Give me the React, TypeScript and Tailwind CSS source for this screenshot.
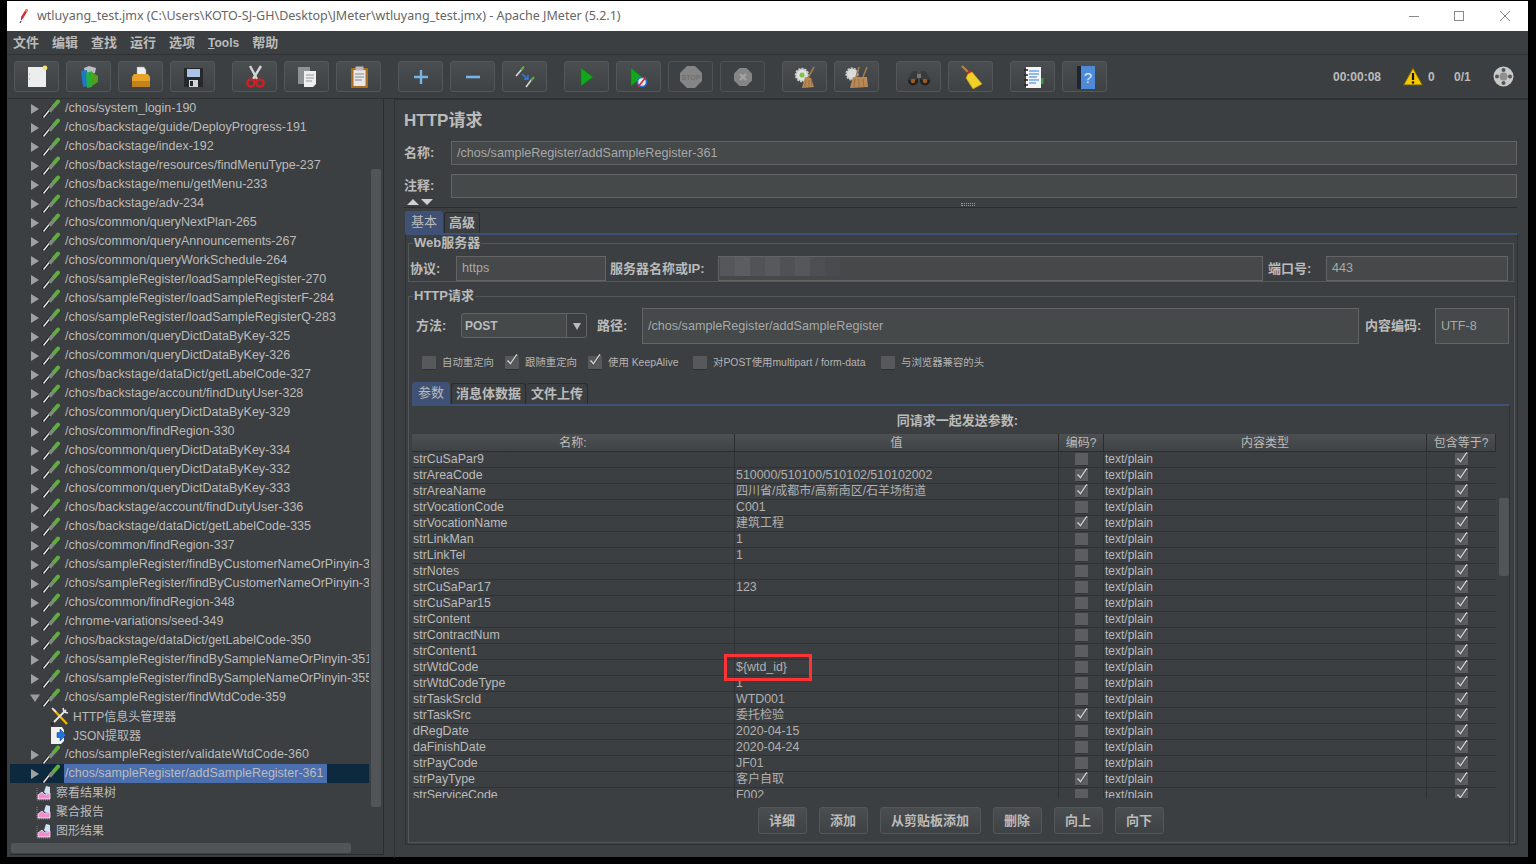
import React from "react";

const Pipette = () => (
  <svg width="20" height="20" viewBox="0 0 20 20" className="shrink-0">
    <path d="M2 19 L11 8" stroke="#15171a" strokeWidth="3.2" />
    <path d="M2.5 18.5 L10.5 8.5" stroke="#e6e6e6" strokeWidth="1.5" />
    <path d="M8.5 12.5 L13.5 6.5" stroke="#7d8a7d" strokeWidth="3.6" />
    <path d="M13.5 6.5 L17 2.5" stroke="#5fae3e" strokeWidth="4" strokeLinecap="round" />
  </svg>
);

const Wrench = () => (
  <svg width="19" height="19" viewBox="0 0 19 19" className="shrink-0">
    <path d="M3 2 L17 17" stroke="#f0b400" strokeWidth="2.4" />
    <path d="M2 1 L6 5" stroke="#e8e8e8" strokeWidth="1.6" />
    <path d="M16 3 L4 15" stroke="#e4e4e4" strokeWidth="2" />
    <path d="M13 1 L14 5 L18 6" fill="none" stroke="#e4e4e4" strokeWidth="1.6" />
    <path d="M1 16 L3 18" stroke="#222" strokeWidth="2" />
  </svg>
);

const JsonDoc = () => (
  <svg width="19" height="19" viewBox="0 0 19 19" className="shrink-0">
    <path d="M1 1 H12 L14 4 V15 L11 18 H1 Z" fill="#f1f1f1" />
    <path d="M10 3 L16 9 L10 15 V11.5 H7 V6.5 H10 Z" fill="#2272d8" stroke="#0e3f8c" strokeWidth="0.5" />
  </svg>
);

const ChartIcon = () => (
  <svg width="16" height="16" viewBox="0 0 16 16" className="shrink-0">
    <path d="M1 3 V15 H15" fill="none" stroke="#888" strokeWidth="1" strokeDasharray="1 1" />
    <path d="M2 14 V10 L6 7 L9 10 L14 8 V14 Z" fill="#f28ad2" stroke="#fff" strokeWidth="0.7" />
    <path d="M10 1 L14 2 V8 L10 9 L8 7 Z" fill="#cfe0f7" />
  </svg>
);

const Arrow = ({ open = false }: { open?: boolean }) => (
  <svg width="10" height="10" viewBox="0 0 10 10" className="shrink-0">
    {open ? <path d="M0 1.5 H10 L5 9 Z" fill="#9a9a9a" /> : <path d="M1 0 L9 5 L1 10 Z" fill="#a0a0a0" />}
  </svg>
);

const Check = ({ small = false }: { small?: boolean }) => (
  <svg width="14" height="14" viewBox="0 0 14 14" className={small ? "absolute left-0 -top-[2px]" : "absolute left-0 -top-[3px]"}>
    <path d="M2.5 7.5 L5.5 11 L12 1.5" fill="none" stroke="#cfcfcf" strokeWidth="1.6" />
    <path d="M2.5 9 L5.5 12.5 L12 3" fill="none" stroke="#3a3c3e" strokeWidth="0.8" />
  </svg>
);

const Box = ({ on = false }: { on?: boolean }) => (
  <div className="relative w-[13px] h-[13px] bg-[#5b5d5f] border-b border-[#333537] rounded-[1px] shrink-0">
    {on && <Check small />}
  </div>
);

const FormCheck = ({ on = false, label, width }: { on?: boolean; label: string; width: string }) => (
  <div className={`flex items-center gap-[6px] ${width}`}>
    <div className="relative w-[14px] h-[14px] bg-[#56585a] border-b border-[#2f3133] rounded-[1px] shrink-0">
      {on && <Check />}
    </div>
    <span className="text-[10.4px] text-[#b4b4b4] whitespace-nowrap">{label}</span>
  </div>
);

const icons: Record<string, React.ReactNode> = {
  new: (
    <>
      <rect x="3" y="2" width="18" height="20" fill="#eceded" />
      <circle cx="4.5" cy="9" r=".6" fill="#999" />
      <circle cx="4.5" cy="14" r=".6" fill="#999" />
      <circle cx="20" cy="3" r="2.4" fill="#f3e27c" />
    </>
  ),
  templates: (
    <>
      <path d="M7 3 L12 1 L19 3 L18 8 H8 Z" fill="#b9bec4" />
      <path d="M4 6 L10 5 L12 21 L6 22 Z" fill="#1c78c8" />
      <path d="M9 8 L15 6 L15 22 L10 23 Z" fill="#25b03a" />
      <path d="M15 7 L21 11 L21 17 L15 21 Z" fill="#4f9e1c" />
    </>
  ),
  open: (
    <>
      <path d="M8 2 H15 L17 5 V13 H8 Z" fill="#eeeeee" stroke="#999" strokeWidth=".5" />
      <path d="M3 12 L5 9 H19 L21 12 V22 H3 Z" fill="#e5a32a" />
      <path d="M3 16 H21 V22 H3 Z" fill="#c4831a" />
    </>
  ),
  save: (
    <>
      <rect x="3" y="3" width="19" height="19" fill="#26292b" />
      <rect x="6" y="4" width="13" height="8" fill="#a9c4e4" />
      <rect x="8" y="15" width="9" height="7" fill="#d5d5d5" />
      <rect x="9" y="16" width="3" height="5" fill="#26292b" />
    </>
  ),
  cut: (
    <>
      <path d="M7 1 L14 14 M18 1 L10 14" stroke="#d4d4d4" strokeWidth="2.4" />
      <circle cx="8" cy="18" r="3.6" fill="none" stroke="#d01f24" strokeWidth="2.4" />
      <circle cx="17" cy="18" r="3.6" fill="none" stroke="#d01f24" strokeWidth="2.4" />
    </>
  ),
  copy: (
    <>
      <rect x="3" y="2" width="12" height="17" fill="#8f9295" />
      <path d="M9 6 H21 V19 L18 22 H9 Z" fill="#eeeeee" />
      <path d="M11 10 H19 M11 13 H19 M11 16 H17" stroke="#999" strokeWidth="1" />
    </>
  ),
  paste: (
    <>
      <rect x="4" y="3" width="17" height="20" rx="1" fill="#a8701e" />
      <rect x="6.5" y="5" width="12" height="16" fill="#e8e8e8" />
      <rect x="8.5" y="1.5" width="8" height="4" fill="#bdbdbd" />
      <path d="M8 9 H17 M8 12 H17 M8 15 H15" stroke="#888" strokeWidth="1" />
    </>
  ),
  plus: <path d="M5 12 H19 M12 5 V19" stroke="#79b4e6" strokeWidth="2.4" />,
  minus: <path d="M5 12 H19" stroke="#79b4e6" strokeWidth="2.6" />,
  toggle: (
    <>
      <path d="M3 11 L10 3" stroke="#d8d8d8" strokeWidth="1.6" />
      <path d="M8 5 L11 1.5" stroke="#5aa83c" strokeWidth="2.2" />
      <path d="M13 22 L19 14" stroke="#d8d8d8" strokeWidth="1.6" />
      <path d="M18 15.5 L21 12" stroke="#5aa83c" strokeWidth="2.2" />
      <path d="M9 9 L15 14 M15 10 V14 H11" fill="none" stroke="#2f7fe0" strokeWidth="1.4" />
    </>
  ),
  play: <path d="M6 3 L18 12 L6 21 Z" fill="#12a81c" stroke="#0a7a12" strokeWidth=".5" />,
  playNt: (
    <>
      <path d="M4 3 L15 12 L4 21 Z" fill="#12a81c" stroke="#0a7a12" strokeWidth=".5" />
      <circle cx="15" cy="17" r="4.5" fill="#e4eefa" stroke="#2f6fd0" strokeWidth="1.6" />
      <path d="M11 22 L19 12" stroke="#d8222a" strokeWidth="1.6" />
    </>
  ),
  stop: (
    <>
      <path d="M8 1 H16 L23 8 V16 L16 23 H8 L1 16 V8 Z" fill="#858585" />
      <text x="12" y="15" textAnchor="middle" fontSize="7" fontWeight="700" fill="#6f6f6f" fontFamily="Liberation Sans">STOP</text>
    </>
  ),
  shutdown: (
    <>
      <path d="M8.5 3 H15.5 L21 8.5 V15.5 L15.5 21 H8.5 L3 15.5 V8.5 Z" fill="#858585" />
      <path d="M9 9 L15 15 M15 9 L9 15" stroke="#a3a3a3" strokeWidth="2.4" />
    </>
  ),
  clear: (
    <>
      <circle cx="9" cy="10" r="6" fill="#e4e4e4" stroke="#cfcfcf" strokeDasharray="2 1" strokeWidth="2.4" />
      <circle cx="9" cy="10" r="2.6" fill="#7fc44a" />
      <path d="M21 2 L15 13" stroke="#a37a4a" strokeWidth="1.6" />
      <path d="M12 12 L18 13 L21 22 L9 23 Z" fill="#b98a58" />
      <path d="M13 15 L12 22 M16 15 L16 22 M18 15 L19 21" stroke="#8a6238" strokeWidth=".7" />
    </>
  ),
  clearAll: (
    <>
      <circle cx="7" cy="9" r="5.5" fill="#dcdcdc" stroke="#c8c8c8" strokeDasharray="2 1" strokeWidth="2.2" />
      <path d="M14 2 L11 12 M22 2 L18 12" stroke="#a37a4a" strokeWidth="1.6" />
      <path d="M8 12 L22 12 L23 22 L5 23 Z" fill="#b98a58" />
      <path d="M10 14 L9 22 M14 14 V22 M18 14 L19 22" stroke="#8a6238" strokeWidth=".7" />
    </>
  ),
  find: (
    <>
      <circle cx="6" cy="15.5" r="5" fill="#1f1f1f" />
      <circle cx="18" cy="15.5" r="5" fill="#1f1f1f" />
      <path d="M4 8 L6 6 H10 V15 H14 V6 H18 L20 8 L23 15 H1 Z" fill="#3a3a3a" />
      <rect x="10" y="9" width="4" height="4" fill="#777" />
      <circle cx="6" cy="16" r="2.3" fill="#a05a1e" />
      <circle cx="18" cy="16" r="2.3" fill="#a05a1e" />
    </>
  ),
  broom: (
    <>
      <path d="M3 1 L10 8" stroke="#b9812c" strokeWidth="2.4" />
      <path d="M7 8 L11 5 L14 8 L11 11 Z" fill="#c9201f" />
      <path d="M9 9 L13 7 L23 19 L14 24 L7 13 Z" fill="#f0cf28" stroke="#c49f14" strokeWidth=".6" />
    </>
  ),
  log: (
    <>
      <rect x="5" y="2" width="15" height="21" fill="#f4f4f4" />
      <path d="M8 6 H18 M8 9 H18 M8 12 H16 M8 15 H18 M8 18 H15" stroke="#2f7fe0" strokeWidth="1.2" />
      <path d="M3 5 H7 M3 10 H7 M3 15 H7 M3 20 H7" stroke="#222" strokeWidth="1.6" />
      <rect x="20" y="13" width="2.5" height="6" fill="#2f9a3a" />
    </>
  ),
  help: (
    <>
      <rect x="4" y="1" width="18" height="23" fill="#4f8ad8" />
      <rect x="4" y="1" width="4" height="23" fill="#1d2530" />
      <text x="15" y="18" textAnchor="middle" fontSize="15" fill="#dfeaf8" fontFamily="Liberation Sans">?</text>
    </>
  ),
};

const ToolButton = ({ icon, off = false }: { icon: string; off?: boolean }) => (
  <div
    className={`w-[45px] h-[31px] rounded-[3px] border flex items-center justify-center shrink-0 ${
      off ? "border-[#4e5254] bg-[#3e4143]" : "border-[#53575a] bg-linear-to-b from-[#4a4e50] to-[#3f4244]"
    }`}
  >
    <svg width="24" height="24" viewBox="0 0 24 24">
      {icons[icon]}
    </svg>
  </div>
);

const toolGroups: { icon: string; off?: boolean }[][] = [
  [{ icon: "new" }, { icon: "templates" }, { icon: "open" }, { icon: "save" }],
  [{ icon: "cut" }, { icon: "copy" }, { icon: "paste" }],
  [{ icon: "plus" }, { icon: "minus" }, { icon: "toggle" }],
  [{ icon: "play" }, { icon: "playNt" }, { icon: "stop", off: true }, { icon: "shutdown", off: true }],
  [{ icon: "clear" }, { icon: "clearAll" }],
  [{ icon: "find" }, { icon: "broom" }],
  [{ icon: "log" }, { icon: "help" }],
];

const treePaths = [
  "/chos/system_login-190",
  "/chos/backstage/guide/DeployProgress-191",
  "/chos/backstage/index-192",
  "/chos/backstage/resources/findMenuType-237",
  "/chos/backstage/menu/getMenu-233",
  "/chos/backstage/adv-234",
  "/chos/common/queryNextPlan-265",
  "/chos/common/queryAnnouncements-267",
  "/chos/common/queryWorkSchedule-264",
  "/chos/sampleRegister/loadSampleRegister-270",
  "/chos/sampleRegister/loadSampleRegisterF-284",
  "/chos/sampleRegister/loadSampleRegisterQ-283",
  "/chos/common/queryDictDataByKey-325",
  "/chos/common/queryDictDataByKey-326",
  "/chos/backstage/dataDict/getLabelCode-327",
  "/chos/backstage/account/findDutyUser-328",
  "/chos/common/queryDictDataByKey-329",
  "/chos/common/findRegion-330",
  "/chos/common/queryDictDataByKey-334",
  "/chos/common/queryDictDataByKey-332",
  "/chos/common/queryDictDataByKey-333",
  "/chos/backstage/account/findDutyUser-336",
  "/chos/backstage/dataDict/getLabelCode-335",
  "/chos/common/findRegion-337",
  "/chos/sampleRegister/findByCustomerNameOrPinyin-346",
  "/chos/sampleRegister/findByCustomerNameOrPinyin-347",
  "/chos/common/findRegion-348",
  "/chrome-variations/seed-349",
  "/chos/backstage/dataDict/getLabelCode-350",
  "/chos/sampleRegister/findBySampleNameOrPinyin-351",
  "/chos/sampleRegister/findBySampleNameOrPinyin-355",
];

const TreeRow = ({ label, open = false, selected = false }: { label: string; open?: boolean; selected?: boolean }) => (
  <div className={`h-[19px] flex items-center pl-[20px] whitespace-nowrap overflow-hidden text-[12.5px] ${selected ? "bg-[#0d293e]" : ""}`}>
    <Arrow open={open} />
    <span className="ml-px">
      <Pipette />
    </span>
    <span className={`ml-[3px] pl-px pr-[4px] h-[19px] leading-[19px] ${selected ? "bg-[#4b6eaf]" : ""}`}>{label}</span>
  </div>
);

const LeafRow = ({ label, children }: { label: string; children: React.ReactNode }) => (
  <div className="h-[19px] flex items-center pl-[40px] gap-[4px] whitespace-nowrap text-[12px]">
    {children}
    <span>{label}</span>
  </div>
);

const ListenerRow = ({ label }: { label: string }) => (
  <div className="h-[19px] flex items-center pl-[26px] gap-[4px] whitespace-nowrap text-[12px]">
    <ChartIcon />
    <span>{label}</span>
  </div>
);

const rows: [string, string, boolean][] = [
  ["strCuSaPar9", "", false],
  ["strAreaCode", "510000/510100/510102/510102002", true],
  ["strAreaName", "四川省/成都市/高新南区/石羊场街道", true],
  ["strVocationCode", "C001", false],
  ["strVocationName", "建筑工程", true],
  ["strLinkMan", "1", false],
  ["strLinkTel", "1", false],
  ["strNotes", "", false],
  ["strCuSaPar17", "123", false],
  ["strCuSaPar15", "", false],
  ["strContent", "", false],
  ["strContractNum", "", false],
  ["strContent1", "", false],
  ["strWtdCode", "${wtd_id}", false],
  ["strWtdCodeType", "1", false],
  ["strTaskSrcId", "WTD001", false],
  ["strTaskSrc", "委托检验", true],
  ["dRegDate", "2020-04-15", false],
  ["daFinishDate", "2020-04-24", false],
  ["strPayCode", "JF01", false],
  ["strPayType", "客户自取", true],
  ["strServiceCode", "F002", false],
];

const Field = ({ className, children }: { className: string; children?: React.ReactNode }) => (
  <div className={`bg-[#45494a] border border-[#646464] flex items-center pl-[5px] text-[#a8a8a8] ${className}`}>{children}</div>
);

const Label = ({ className = "", children }: { className?: string; children: React.ReactNode }) => (
  <span className={`font-bold text-[13px] text-[#bbbbbb] whitespace-nowrap ${className}`}>{children}</span>
);

const blurBlocks = ["bg-[#54585a]", "bg-[#5a5e60]", "bg-[#505456]", "bg-[#565a5c]", "bg-[#4e5254]", "bg-[#54585a]", "bg-[#4c5052]", "bg-[#484c4e]"];

const headers = ["名称:", "值", "编码?", "内容类型", "包含等于?"];
const bottomButtons = ["详细", "添加", "从剪贴板添加", "删除", "向上", "向下"];

export default function App() {
  return (
    <div className="h-screen bg-black pl-[7px] pt-px overflow-hidden font-['Liberation_Sans','Noto_Sans_CJK_SC',sans-serif] text-[12.6px] text-[#bbbbbb]">
      <div className="w-[1521px] h-[856px] flex flex-col bg-[#3c3f41]">
        {/* title bar */}
        <div className="h-[30px] shrink-0 bg-white flex items-center pl-[11px] text-[#666666]">
          <svg width="12" height="16" viewBox="0 0 12 16" className="shrink-0">
            <path d="M8 1 L10 2 L6 9 L3 13 L3 9 Z" fill="#d62b3c" />
            <path d="M8 1 L10 2 L9 4 L7 3 Z" fill="#f08a2a" />
            <path d="M2 15 L3 13" stroke="#222" strokeWidth="1" />
          </svg>
          <span className="ml-[7px] font-['Noto_Sans',sans-serif] text-[12.5px] whitespace-nowrap">
            wtluyang_test.jmx (C:\Users\KOTO-SJ-GH\Desktop\JMeter\wtluyang_test.jmx) - Apache JMeter (5.2.1)
          </span>
          <div className="ml-auto flex items-center">
            <div className="w-[10px] h-px bg-[#888]" />
            <div className="ml-[35px] w-[10px] h-[10px] border border-[#888]" />
            <svg width="10" height="10" viewBox="0 0 10 10" className="ml-[36px] mr-[18px]">
              <path d="M0 0 L10 10 M10 0 L0 10" stroke="#888" strokeWidth="1" />
            </svg>
          </div>
        </div>

        {/* menu */}
        <div className="h-[24px] shrink-0 flex items-center pl-[6px] gap-[13px] font-bold border-b border-[#2f3234] text-[13px]">
          <span>文件</span>
          <span>编辑</span>
          <span>查找</span>
          <span>运行</span>
          <span>选项</span>
          <span className="text-[12px]">
            <span className="underline">T</span>ools
          </span>
          <span>帮助</span>
        </div>

        {/* toolbar */}
        <div className="h-[43px] shrink-0 flex items-center pl-[7px] pb-px border-b border-[#2f3234] mt-px">
          <div className="flex gap-[17px]">
            {toolGroups.map((g, i) => (
              <div key={i} className="flex gap-[7px]">
                {g.map((b) => (
                  <ToolButton key={b.icon} icon={b.icon} off={b.off} />
                ))}
              </div>
            ))}
          </div>
          <span className="ml-[226px] w-[70px] font-bold text-[12px]">00:00:08</span>
          <svg width="20" height="20" viewBox="0 0 20 20" className="shrink-0">
            <path d="M10 1 L19.5 18 H0.5 Z" fill="#f5c800" stroke="#6b5a10" strokeWidth="1" />
            <path d="M10 6 V13" stroke="#111" strokeWidth="2.2" />
            <circle cx="10" cy="15.5" r="1.2" fill="#111" />
          </svg>
          <span className="ml-[5px] w-[26px] font-bold text-[12px]">0</span>
          <span className="w-[39px] font-bold text-[12px]">0/1</span>
          <svg width="21" height="21" viewBox="0 0 21 21" className="shrink-0">
            <circle cx="10.5" cy="10.5" r="10" fill="#c9c9c9" />
            <circle cx="10.5" cy="10.5" r="4" fill="#8f8f8f" />
            <circle cx="10.5" cy="4" r="2" fill="#555" />
            <circle cx="10.5" cy="17" r="2" fill="#555" />
            <circle cx="4" cy="10.5" r="2" fill="#555" />
            <circle cx="17" cy="10.5" r="2" fill="#555" />
          </svg>
        </div>

        <div className="flex-1 flex min-h-0">
          {/* tree */}
          <div className="ml-[3px] w-[374px] h-[756px] flex flex-col border-r border-b border-[#2a2c2e] shrink-0">
            <div className="flex h-[741px]">
              <div className="w-[359px] overflow-hidden shrink-0">
                {treePaths.map((p) => (
                  <TreeRow key={p} label={p} />
                ))}
                <TreeRow label="/chos/sampleRegister/findWtdCode-359" open />
                <LeafRow label="HTTP信息头管理器">
                  <Wrench />
                </LeafRow>
                <LeafRow label="JSON提取器">
                  <JsonDoc />
                </LeafRow>
                <TreeRow label="/chos/sampleRegister/validateWtdCode-360" />
                <TreeRow label="/chos/sampleRegister/addSampleRegister-361" selected />
                <ListenerRow label="察看结果树" />
                <ListenerRow label="聚合报告" />
                <ListenerRow label="图形结果" />
              </div>
              <div className="pl-[2px] pt-[70px]">
                <div className="w-[10px] h-[638px] bg-[#525557] rounded-[2px]" />
              </div>
            </div>
            <div className="pl-px pt-[3px]">
              <div className="w-[340px] h-[10px] bg-[#525557] rounded-[2px]" />
            </div>
          </div>

          {/* editor */}
          <div className="ml-[10px] w-[1134px] h-[759px] border-l border-t border-[#2f3234] pl-[9px] flex flex-col shrink-0">
            <div className="mt-[10px] h-[22px] leading-[22px] text-[17px] font-bold text-[#bbbbbb] shrink-0">HTTP请求</div>
            <div className="mt-[9px] flex items-center shrink-0">
              <Label className="w-[47px]">名称:</Label>
              <Field className="w-[1066px] h-[24px]">/chos/sampleRegister/addSampleRegister-361</Field>
            </div>
            <div className="mt-[9px] flex items-center shrink-0">
              <Label className="w-[47px]">注释:</Label>
              <Field className="w-[1066px] h-[24px]" />
            </div>
            <div className="h-[10px] w-[1113px] border-b border-[#2a2c2e] flex items-center shrink-0 relative">
              <svg width="26" height="7" viewBox="0 0 26 7" className="ml-[3px]">
                <path d="M0 6 L6 0 L12 6 Z M14 0 H26 L20 6 Z" fill="#d0d0d0" />
              </svg>
              <div className="absolute left-[557px] top-[5px] w-[14px] h-[3px] border-y border-dotted border-[#999]" />
            </div>

            {/* main tabs */}
            <div className="mt-[3px] ml-px flex items-end h-[22px] shrink-0">
              <div className="w-[38px] h-[22px] bg-[#3f5275] rounded-t-[3px] flex items-center justify-center text-[13px]">基本</div>
              <div className="ml-px w-[36px] h-[21px] border-x border-t border-[#2a2c2e] rounded-t-[3px] flex items-center justify-center text-[13px] font-bold">高级</div>
            </div>
            <div className="ml-px w-[1113px] h-[612px] border-t-2 border-[#3f5275] border-x border-x-[#2f3234] border-b-[#2f3234] border-b pl-px pr-[3px] shrink-0">
              <fieldset className="mt-px h-[46px] ml-px border border-[#55585a] pl-px pr-[5px]">
                <legend className="ml-[3px] px-px h-[14px] leading-[14px] font-bold text-[13px]">Web服务器</legend>
                <div className="pt-[6px] flex items-center">
                  <Label className="w-[46px]">协议:</Label>
                  <Field className="w-[150px] h-[25px]">https</Field>
                  <Label className="ml-[4px] w-[108px]">服务器名称或IP:</Label>
                  <Field className="w-[545px] h-[25px] relative">
                    <div className="absolute left-px top-0 flex h-[19px]">
                      {blurBlocks.map((c, i) => (
                        <div key={i} className={`w-[15px] ${c}`} />
                      ))}
                    </div>
                  </Field>
                  <Label className="ml-[5px] w-[58px]">端口号:</Label>
                  <Field className="w-[182px] h-[25px]">443</Field>
                </div>
              </fieldset>

              <fieldset className="mt-[7px] ml-px h-[554px] border border-[#55585a] pl-[3px] pr-[4px]">
                <legend className="ml-px px-px h-[14px] leading-[14px] font-bold text-[13px]">HTTP请求</legend>
                <div className="pt-[5px] h-[41px] flex items-center pl-[4px]">
                  <Label className="w-[45px]">方法:</Label>
                  <div className="w-[126px] h-[25px] -mt-px border border-[#646464] bg-[#45494a] rounded-[3px] flex">
                    <span className="flex-1 pl-[3px] pt-[3px] font-bold text-[12px]">POST</span>
                    <span className="w-[20px] border-l border-[#646464] bg-[#3c3f41] rounded-r-[3px] flex items-center justify-center">
                      <svg width="8" height="8" viewBox="0 0 8 8">
                        <path d="M0 1 H8 L4 8 Z" fill="#bbb" />
                      </svg>
                    </span>
                  </div>
                  <Label className="ml-[10px] w-[45px]">路径:</Label>
                  <Field className="w-[717px] h-[36px]">/chos/sampleRegister/addSampleRegister</Field>
                  <Label className="ml-[6px] w-[70px]">内容编码:</Label>
                  <Field className="w-[74px] h-[36px]">UTF-8</Field>
                </div>
                <div className="mt-[9px] h-[20px] flex items-center pl-[10px]">
                  <FormCheck label="自动重定向" width="w-[83px]" />
                  <FormCheck on label="跟随重定向" width="w-[83px]" />
                  <FormCheck on label="使用 KeepAlive" width="w-[105px]" />
                  <FormCheck label="对POST使用multipart / form-data" width="w-[188px]" />
                  <FormCheck label="与浏览器兼容的头" width="w-[120px]" />
                </div>

                {/* parameter tabs */}
                <div className="mt-[9px] flex items-end h-[22px]">
                  <div className="w-[38px] h-[22px] bg-[#3f5275] rounded-t-[3px] flex items-center justify-center text-[13px]">参数</div>
                  <div className="ml-px w-[75px] h-[21px] border-x border-t border-[#2a2c2e] rounded-t-[3px] flex items-center justify-center text-[13px] font-bold">消息体数据</div>
                  <div className="ml-px w-[61px] h-[21px] border-r border-t border-[#2a2c2e] rounded-t-[3px] flex items-center justify-center text-[13px] font-bold">文件上传</div>
                </div>
                <div className="h-[443px] border-t-2 border-[#3f5275] border-r border-r-[#2f3234] flex flex-col">
                  <div className="h-[28px] pt-[2px] pr-[6px] shrink-0 flex items-center justify-center font-bold text-[13px]">同请求一起发送参数:</div>
                  <div className="flex h-[364px] shrink-0">
                    <div className="w-[1084px] relative shrink-0 text-[12.4px]">
                      <div className="grid grid-cols-[323px_324px_45px_323px_69px] h-[18px] bg-linear-to-b from-[#4d5052] to-[#404345] border-b border-[#2a2c2e] text-[12px]">
                        {headers.map((h) => (
                          <div key={h} className="border-r border-[#2a2c2e] flex items-center justify-center whitespace-nowrap">
                            {h}
                          </div>
                        ))}
                      </div>
                      <div className="h-[346px] overflow-hidden">
                        {rows.map(([name, value, enc]) => (
                          <div key={name} className="grid grid-cols-[323px_324px_45px_323px_69px] h-[16px] border-b border-[#2f3234] leading-[15px]">
                            <div className="pl-px border-r border-[#2f3234] whitespace-nowrap">{name}</div>
                            <div className={`pl-px border-r border-[#2f3234] whitespace-nowrap text-[#b0b0b0] ${/[^\x00-\x7f]/.test(value) ? "text-[12px]" : ""}`}>{value}</div>
                            <div className="border-r border-[#2f3234] flex items-center justify-center">
                              <Box on={enc} />
                            </div>
                            <div className="pl-px border-r border-[#2f3234] whitespace-nowrap text-[12px]">text/plain</div>
                            <div className="flex items-center justify-center">
                              <Box on />
                            </div>
                          </div>
                        ))}
                      </div>
                      <div className="absolute left-[312px] top-[220px] w-[88px] h-[27px] border-[3px] border-[#ff3333]" />
                    </div>
                    <div className="pl-[3px] pt-[64px]">
                      <div className="w-[10px] h-[78px] bg-[#525557] rounded-[2px]" />
                    </div>
                  </div>
                  <div className="mt-[9px] flex justify-center gap-[12px]">
                    {bottomButtons.map((b) => (
                      <div
                        key={b}
                        className={`h-[27px] rounded-[3px] border border-[#53575a] bg-linear-to-b from-[#4a4e50] to-[#3f4244] flex items-center justify-center font-bold text-[13px] ${
                          b === "从剪贴板添加" ? "w-[101px]" : "w-[49px]"
                        }`}
                      >
                        {b}
                      </div>
                    ))}
                  </div>
                </div>
              </fieldset>
            </div>
          </div>
        </div>
      </div>
    </div>
  );
}
